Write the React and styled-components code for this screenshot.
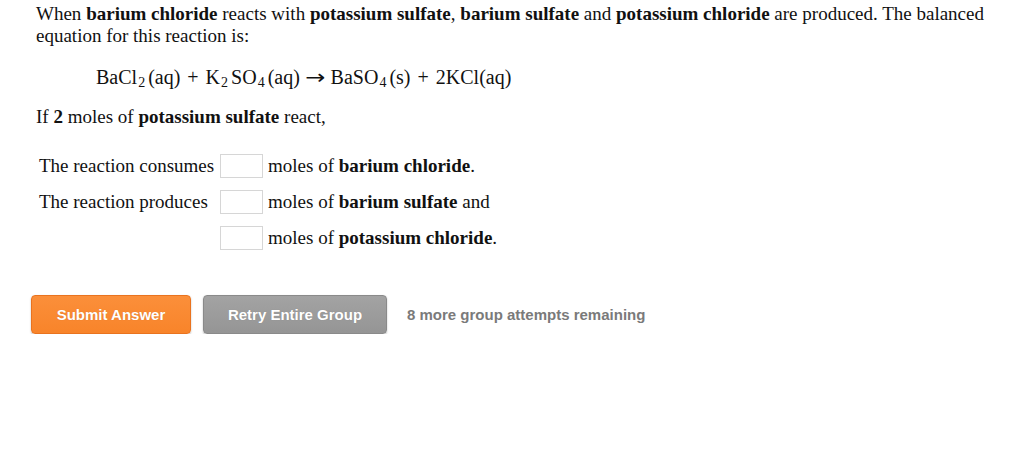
import React from "react";
import styled, { createGlobalStyle } from "styled-components";

const Global = createGlobalStyle`
  html, body { margin: 0; padding: 0; background: #fff; }
  body { font-family: "Liberation Serif", "Times New Roman", serif; color: #111; }
`;

const Page = styled.div`
  padding: 3px 30px 0 36px;
  width: 1024px;
  box-sizing: border-box;
`;

const Para = styled.p`
  margin: 0;
  font-size: 19px;
  line-height: 22px;
  b { font-weight: bold; }
`;

const Equation = styled.div`
  margin: 18px 0 0 60px;
  font-family: "Liberation Serif", "Times New Roman", serif;
  font-size: 20px;
  line-height: 24px;
  white-space: nowrap;
  display: flex;
  align-items: baseline;
`;

const Sub = styled.sub`
  font-size: 14px;
  vertical-align: -3px;
  line-height: 0;
  margin: 0 3px 0 1px;
`;

const Op = styled.span`
  margin: 0 ${(p) => p.$sp || 7}px;
`;

const Arrow = styled.span`
  font-family: "DejaVu Sans", sans-serif;
  font-size: 20px;
  margin: 0 7px;
  display: inline-block;
  transform: scaleX(1.2);
`;

const Question = styled(Para)`
  margin-top: 17px;
`;

const Rows = styled.div`
  margin-top: 26px;
  display: grid;
  grid-template-columns: 184px 43px auto;
  row-gap: 12px;
  align-items: center;
  font-size: 19px;
  line-height: 22px;
`;

const Label = styled.span`
  padding-left: 3px;
`;

const Box = styled.input`
  width: 43px;
  height: 24px;
  box-sizing: border-box;
  border: 1px solid #d6d6d6;
  margin: 0;
  padding: 0;
  background: #fff;
`;

const Tail = styled.span`
  padding-left: 5px;
`;

const Actions = styled.div`
  margin-top: 45px;
  display: flex;
  align-items: center;
  gap: 12px;
  margin-left: -5px;
`;

const Button = styled.button`
  height: 39px;
  width: ${(p) => p.$w}px;
  box-sizing: border-box;
  border-radius: 4px;
  border: 1px solid ${(p) => p.$border};
  background: linear-gradient(to bottom, ${(p) => p.$top}, ${(p) => p.$bottom});
  color: #fff;
  font-family: "Liberation Sans", Arial, sans-serif;
  font-weight: bold;
  font-size: 15px;
  text-shadow: 0 0 1px rgba(0,0,0,0.15);
  box-shadow: 0 1px 2px rgba(0,0,0,0.25);
  cursor: pointer;
  padding: 0;
`;

const Remaining = styled.span`
  margin-left: 8px;
  font-family: "Liberation Sans", Arial, sans-serif;
  font-weight: bold;
  font-size: 15px;
  color: #7a7a7a;
`;

export default function App() {
  return (
    <>
      <Global />
      <Page>
        <Para>
          When <b>barium chloride</b> reacts with <b>potassium sulfate</b>, <b>barium sulfate</b> and{" "}
          <b>potassium chloride</b> are produced. The balanced equation for this reaction is:
        </Para>
        <Equation>
          <span>
            BaCl<Sub>2</Sub>(aq)
          </span>
          <Op>+</Op>
          <span>
            K<Sub>2</Sub>SO<Sub>4</Sub>(aq)
          </span>
          <Arrow>→</Arrow>
          <span>
            BaSO<Sub>4</Sub>(s)
          </span>
          <Op>+</Op>
          <span>2KCl(aq)</span>
        </Equation>
        <Question>
          If <b>2</b> moles of <b>potassium sulfate</b> react,
        </Question>
        <Rows>
          <Label>The reaction consumes</Label>
          <Box />
          <Tail>
            moles of <b>barium chloride</b>.
          </Tail>
          <Label>The reaction produces</Label>
          <Box />
          <Tail>
            moles of <b>barium sulfate</b> and
          </Tail>
          <span />
          <Box />
          <Tail>
            moles of <b>potassium chloride</b>.
          </Tail>
        </Rows>
        <Actions>
          <Button $w={160} $border="#e9731f" $top="#fb8f3a" $bottom="#f8842a">
            Submit Answer
          </Button>
          <Button $w={184} $border="#8a8a8a" $top="#a3a3a3" $bottom="#959595">
            Retry Entire Group
          </Button>
          <Remaining>8 more group attempts remaining</Remaining>
        </Actions>
      </Page>
    </>
  );
}
